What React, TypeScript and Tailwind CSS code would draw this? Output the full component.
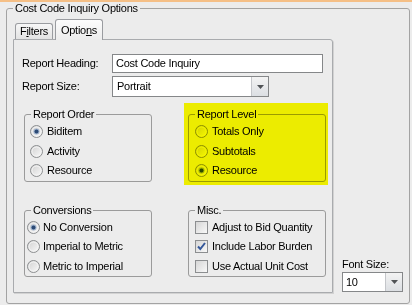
type Option = {
  label: string;
  checked?: boolean;
};

const reportOrder: Array<Option> = [
  { label: "Biditem", checked: true },
  { label: "Activity" },
  { label: "Resource" },
];

const reportLevel: Array<Option> = [
  { label: "Totals Only" },
  { label: "Subtotals" },
  { label: "Resource", checked: true },
];

const conversions: Array<Option> = [
  { label: "No Conversion", checked: true },
  { label: "Imperial to Metric" },
  { label: "Metric to Imperial" },
];

const misc: Array<Option> = [
  { label: "Adjust to Bid Quantity" },
  { label: "Include Labor Burden", checked: true },
  { label: "Use Actual Unit Cost" },
];

const Radio = ({ checked }: { checked?: boolean }) => (
  <svg width="13" height="13" viewBox="0 0 13 13" className="shrink-0">
    <defs>
      <linearGradient id="radioFill" x1="0" y1="0" x2="1" y2="1">
        <stop offset="0" stopColor="#cfcfcf" />
        <stop offset="1" stopColor="#fbfbfb" />
      </linearGradient>
    </defs>
    <circle cx="6.5" cy="6.5" r="6" fill="url(#radioFill)" stroke="#8c8e90" />
    <circle cx="6.5" cy="6.5" r="4.5" fill="none" stroke="#f4f4f4" strokeWidth="1" />
    {checked && (
      <>
        <circle cx="6.5" cy="6.5" r="3" fill="#9fb2cc" />
        <circle cx="6.5" cy="6.5" r="2" fill="#2c4a75" />
      </>
    )}
  </svg>
);

const Checkbox = ({ checked }: { checked?: boolean }) => (
  <svg width="13" height="13" viewBox="0 0 13 13" className="shrink-0">
    <defs>
      <linearGradient id="checkFill" x1="0" y1="0" x2="1" y2="1">
        <stop offset="0" stopColor="#d4d4d4" />
        <stop offset="1" stopColor="#fafafa" />
      </linearGradient>
    </defs>
    <rect x="0.5" y="0.5" width="12" height="12" fill="url(#checkFill)" stroke="#8c8e90" />
    {checked && (
      <path d="M3 6.5L5.3 9L10 3" stroke="#34579a" strokeWidth="2" fill="none" />
    )}
  </svg>
);

const DropArrow = () => (
  <div className="w-[17px] h-full flex items-center justify-center border-l border-[#c4c6ca] bg-gradient-to-b from-[#f3f3f3] to-[#dcdfe3]">
    <svg width="7" height="4" viewBox="0 0 7 4">
      <path d="M0 0H7L3.5 4Z" fill="#505356" />
    </svg>
  </div>
);

const Group = ({
  title,
  width,
  pad,
  gap,
  items,
  kind,
}: {
  title: string;
  width: string;
  pad: string;
  gap: string;
  items: Array<Option>;
  kind: "radio" | "check";
}) => (
  <fieldset className={`${width} border border-[#9b9b9b] rounded-[3px]`}>
    <legend className="ml-[6px] px-[2px]">{title}</legend>
    <div className={`${pad} pt-[1px]`}>
      {items.map((item) => (
        <div key={item.label} className={`flex items-center h-[19.5px] ${gap}`}>
          {kind === "radio" ? (
            <Radio checked={item.checked} />
          ) : (
            <Checkbox checked={item.checked} />
          )}
          <span className="whitespace-nowrap">{item.label}</span>
        </div>
      ))}
    </div>
  </fieldset>
);

const App = () => {
  return (
    <div className="w-[412px] h-[305px] overflow-hidden bg-[#ececec] font-['Liberation_Sans',Arial,sans-serif] text-[11px] leading-[13px] tracking-[-0.25px] text-black">
      <div className="h-[2px] bg-[#f5bf86]" />

      <fieldset className="ml-[6px] w-[404px] border border-[#a3a3a3] rounded-[3px]">
        <legend className="ml-[6px] px-[2px]">Cost Code Inquiry Options</legend>

        <div className="flex items-end pl-[6px] pt-[4px] pb-[10px]">
          <div className="w-[320px]">
            {/* Tabs */}
            <div className="relative z-10 flex items-end h-[20px]">
              <div className="ml-[2px] w-[38px] h-[16px] flex items-center justify-center border border-b-0 border-[#9a9ca0] rounded-t-[3px] bg-gradient-to-b from-[#f7f7f7] to-[#e3e3e3]">
                F<span className="underline">i</span>lters
              </div>
              <div className="ml-[2px] w-[48px] h-[21px] -mb-[1px] flex items-center justify-center border border-b-0 border-[#9a9ca0] rounded-t-[3px] bg-gradient-to-b from-[#fcfcfc] to-[#ececec]">
                Optio<span className="underline">n</span>s
              </div>
            </div>

            {/* Panel */}
            <div className="h-[254px] border border-[#a9abae] rounded-tr-[3px] shadow-[1px_1px_0_#d2d2d2] pl-[8px] pt-[14px]">
              <div className="flex items-center h-[19px]">
                <span className="w-[90px]">Report Heading:</span>
                <div className="w-[211px] h-[19px] flex items-center border border-[#858789] bg-white pl-[3px]">
                  Cost Code Inquiry
                </div>
              </div>
              <div className="flex items-center h-[21px] mt-[3px]">
                <span className="w-[90px]">Report Size:</span>
                <div className="w-[157px] h-[21px] flex items-center border border-[#858789] bg-white">
                  <span className="flex-1 pl-[4px]">Portrait</span>
                  <DropArrow />
                </div>
              </div>

              <div className="mt-[11px] ml-[2px] grid grid-cols-[128px_138px] gap-x-[36px] gap-y-[22px]">
                <Group
                  title="Report Order"
                  width="w-[128px]"
                  pad="pl-[5px]"
                  gap="gap-[4px]"
                  items={reportOrder}
                  kind="radio"
                />
                <div className="relative">
                  <Group
                    title="Report Level"
                    width="w-[138px]"
                    pad="pl-[6px]"
                    gap="gap-[4px]"
                    items={reportLevel}
                    kind="radio"
                  />
                  {/* highlight */}
                  <div className="absolute -left-[4px] -right-[2px] -top-[5px] -bottom-[3px] bg-[#ffff00] mix-blend-multiply pointer-events-none" />
                </div>
                <Group
                  title="Conversions"
                  width="w-[128px]"
                  pad="pl-[2px]"
                  gap="gap-[3px]"
                  items={conversions}
                  kind="radio"
                />
                <Group
                  title="Misc."
                  width="w-[138px]"
                  pad="pl-[6px]"
                  gap="gap-[4px]"
                  items={misc}
                  kind="check"
                />
              </div>
            </div>
          </div>

          {/* Font size */}
          <div className="ml-[9px] pb-[1px]">
            <div className="mb-[1px]">Font Size:</div>
            <div className="w-[61px] h-[20px] flex items-center border border-[#858789] bg-white">
              <span className="flex-1 pl-[3px]">10</span>
              <DropArrow />
            </div>
          </div>
        </div>
      </fieldset>
    </div>
  );
};

export default App;
